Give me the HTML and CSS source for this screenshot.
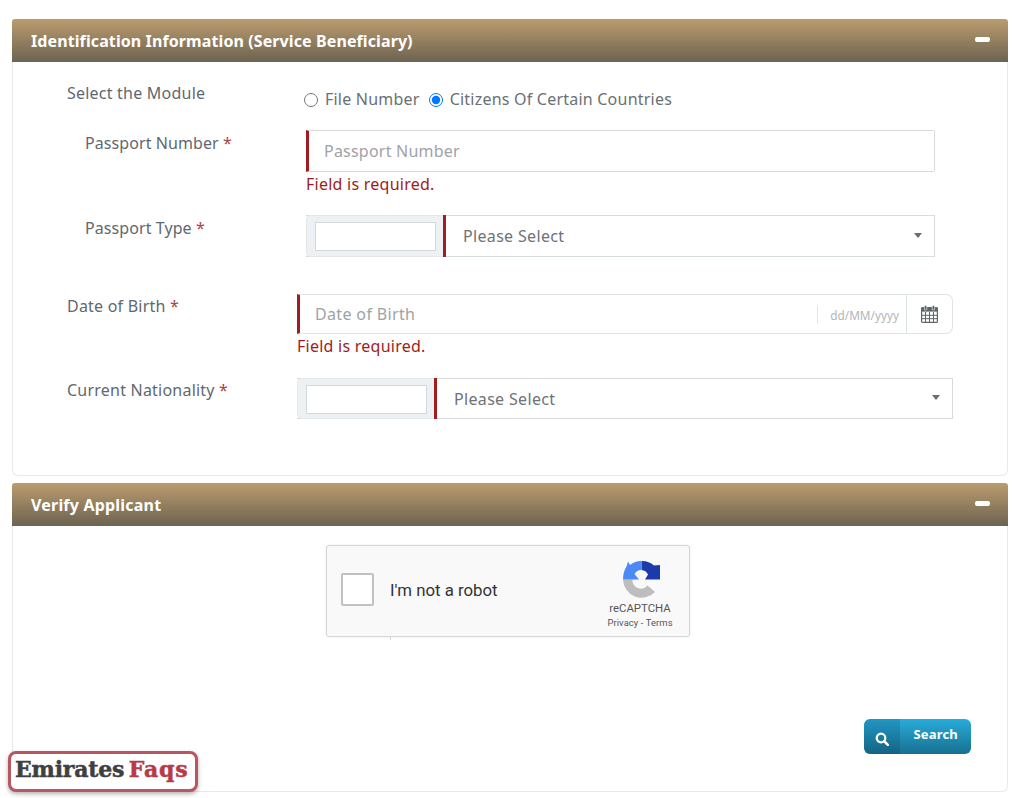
FILE: index.html
```html
<!DOCTYPE html>
<html lang="en">
<head>
<meta charset="utf-8">
<title>Identification Information</title>
<link rel="stylesheet" href="styles.css">
</head>
<body>
<main class="page">
  <section class="panel panel-id">
    <header class="panel-head">
      <h2 class="panel-title">Identification Information (Service Beneficiary)</h2>
      <span class="collapse"></span>
    </header>
    <div class="form">
      <div class="row row-module">
        <label class="label">Select the Module</label>
        <div class="radios">
          <label class="radio"><input type="radio" name="module"><span>File Number</span></label>
          <label class="radio"><input type="radio" name="module" checked><span>Citizens Of Certain Countries</span></label>
        </div>
      </div>
      <div class="row nested row-passport">
        <label class="label">Passport Number <span class="req">*</span></label>
        <div>
          <input class="input tall" type="text" placeholder="Passport Number">
          <div class="error">Field is required.</div>
        </div>
      </div>
      <div class="row nested row-type">
        <label class="label">Passport Type <span class="req">*</span></label>
        <div class="select tall">
          <div class="addon"><span class="addon-box"></span></div>
          <div class="select-value"><span>Please Select</span><span class="caret"></span></div>
        </div>
      </div>
      <div class="row row-dob">
        <label class="label">Date of Birth <span class="req">*</span></label>
        <div>
          <div class="date">
            <input class="date-input" type="text" placeholder="Date of Birth">
            <span class="format">dd/MM/yyyy</span>
            <span class="date-btn">
              <svg class="cal" width="17" height="18" viewBox="0 0 17 18" aria-hidden="true">
                <rect x="0.6" y="2.6" width="15.8" height="14.8" rx="1" fill="none" stroke="#5d666c" stroke-width="1.2"/>
                <rect x="0.6" y="2.6" width="15.8" height="4" fill="#5d666c"/>
                <path d="M4.5 7v10M8.5 7v10M12.5 7v10M1 10.3h15M1 13.7h15" stroke="#5d666c" stroke-width="1"/>
                <rect x="3.4" y="0.5" width="2.4" height="4.5" rx="1" fill="#5d666c" stroke="#fff" stroke-width=".6"/>
                <rect x="11.2" y="0.5" width="2.4" height="4.5" rx="1" fill="#5d666c" stroke="#fff" stroke-width=".6"/>
              </svg>
            </span>
          </div>
          <div class="error">Field is required.</div>
        </div>
      </div>
      <div class="row row-nat">
        <label class="label">Current Nationality <span class="req">*</span></label>
        <div class="select nat">
          <div class="addon"><span class="addon-box"></span></div>
          <div class="select-value"><span>Please Select</span><span class="caret"></span></div>
        </div>
      </div>
    </div>
  </section>

  <section class="panel panel-verify">
    <header class="panel-head">
      <h2 class="panel-title verify-title">Verify Applicant</h2>
      <span class="collapse"></span>
    </header>
    <div class="verify">
      <div class="captcha">
        <span class="check"></span>
        <span class="robot">I'm not a robot</span>
        <div class="brand">
          <svg class="logo" width="37" height="37" viewBox="0 0 37 37" aria-hidden="true">
            <path fill="#bdbdbd" d="M0 18.5H9.5A8.5 8.5 0 0 0 24.5 24.5L32 31A18.6 18.6 0 0 1 0 18.5Z"/>
            <path fill="#1c3aa9" d="M18.5 0A18.5 18.5 0 0 1 31 4.5L37 4V18.5H22L25 13.5A8 8 0 0 0 18.5 9Z"/>
            <path fill="#4a8af4" d="M18.5 0V9A8 8 0 0 0 11.5 13L16 18.5H0C0 13 1.5 8.5 3.5 5.5L5 .5L7 4A18 18 0 0 1 18.5 0Z"/>
          </svg>
          <span class="brand-name">reCAPTCHA</span>
          <span class="brand-links">Privacy - Terms</span>
        </div>
      </div>
      <span class="captcha-tick"></span>
      <div class="actions">
        <button class="search" type="button">
          <span class="search-icon">
            <svg width="14" height="14" viewBox="0 0 14 14" aria-hidden="true">
              <circle cx="6" cy="6" r="4.3" fill="none" stroke="#fff" stroke-width="2.2"/>
              <path d="M9.2 9.2 12.8 12.8" stroke="#fff" stroke-width="2.6" stroke-linecap="round"/>
            </svg>
          </span>
          <span class="search-text">Search</span>
        </button>
      </div>
    </div>
  </section>
</main>
<div class="stamp"><span class="stamp-dark">Emirates</span> <span class="stamp-red">Faqs</span></div>
</body>
</html>
```
FILE: styles.css
```css
* { box-sizing: border-box; }
html, body { margin: 0; height: 798px; overflow: hidden; background: #fff; }
body { font-family: "Noto Sans", "Open Sans", sans-serif; font-size: 16px; line-height: 24px; color: #5f686e; position: relative; letter-spacing: .22px; }

.page { padding: 19px 16px 0 12px; display: flex; flex-direction: column; gap: 7px; }

.panel { border: 1px solid #e7eaeb; border-top: 0; border-radius: 6px; background: #fff; }
.panel-id { height: 457px; }
.panel-verify { height: 309px; }

.panel-head {
  height: 43px; margin: 0 -1px; padding: 0 18px 0 19px;
  display: flex; align-items: center; justify-content: space-between;
  background: linear-gradient(#bb9c6f, #6c6351);
  border-radius: 3px 3px 0 0;
}
.panel-title { margin: 0; font-size: 16px; font-weight: 700; color: #fff; line-height: 24px; letter-spacing: .1px; }
.verify-title { letter-spacing: .2px; }
.collapse { width: 15px; height: 5px; margin-top: -3px; background: #fff; border-radius: 2px; }

.form { padding: 19px 54px 0; }
.row { display: grid; grid-template-columns: 230px 1fr; }
.nested { grid-template-columns: 221px 1fr; padding: 0 18px; }
.label { display: block; }
.nested .label { padding-top: 1px; letter-spacing: .08px; }
.req { color: #a94442; }

.row-module { margin-bottom: 19px; }
.row-passport { margin-bottom: 19px; }
.row-type { margin-bottom: 37px; }
.row-dob { margin-bottom: 20px; }

.radios { margin-top: 6px; padding-left: 7px; display: flex; gap: 9px; color: #6b7075; }
.radio { display: flex; align-items: center; gap: 7px; white-space: nowrap; }
.radio input { width: 14px; height: 14px; margin: 2px 0 0; }

.input { display: block; width: 100%; font: inherit; letter-spacing: inherit; color: inherit; background: #fff; outline: 0; }
.tall { height: 42px; }
.input {
  border: 1px solid #d6dcde; border-left: 3px solid #a01c20; border-radius: 0 2px 2px 0;
  padding: 0 15px;
}
::placeholder { color: #9ea3a6; opacity: 1; }
.error { color: #a01c20; letter-spacing: .25px; }

.select { display: flex; border: 1px solid #d6dcde; border-left: 0; }
.nat { height: 41px; }
.addon {
  width: 137px; padding: 6px 7px 5px 8px; background: #eef1f3;
  border: 1px solid #e4e8ea; border-right: 0; border-radius: 5px 0 0 5px; margin: -1px 0;
  display: flex; align-items: center;
}
.addon-box { display: block; width: 100%; height: 29px; background: #fff; border: 1px solid #d3d8da; }
.select-value {
  flex: 1; margin: -1px 0; border-left: 3px solid #a01c20; padding: 0 12px 0 17px;
  display: flex; align-items: center; justify-content: space-between; color: #6d7377; letter-spacing: .33px;
}
.caret { width: 0; height: 0; border: 4.5px solid transparent; border-top: 5px solid #666c70; border-bottom: 0; margin-top: -2px; }

.date {
  height: 40px; display: flex; align-items: center;
  border: 1px solid #dfe4e5; border-left: 3px solid #a01c20; border-radius: 0 7px 7px 0;
}
.date-input { flex: 1; min-width: 0; height: 100%; border: 0; outline: 0; padding: 0 0 0 15px; font: inherit; letter-spacing: .35px; background: transparent; }
.format { font-size: 11.8px; letter-spacing: 0; color: #b2b6b8; padding: 0 7px 0 12px; border-left: 1px solid #e3e6e7; line-height: 18px; margin-top: 1px; }
.date-btn { width: 46px; height: 100%; border-left: 1px solid #dfe4e5; display: flex; align-items: center; justify-content: center; }

.verify { padding: 19px 36px 38px 313px; position: relative; }
.captcha {
  width: 364px; height: 92px; position: relative; display: flex; align-items: center;
  padding: 0 14px 0 14px; letter-spacing: 0;
  background: #f9f9f9; border: 1px solid #d6d6d6; border-radius: 3px;
  box-shadow: 0 0 3px rgba(0,0,0,.08);
}
.check { width: 33px; height: 33px; margin-top: -4px; background: #fff; border: 2px solid #c1c1c1; border-radius: 2px; }
.robot { margin-left: 16px; font-family: Roboto, sans-serif; font-size: 16.8px; color: #333; flex: 1; margin-top: -2px; }
.brand { width: 70px; display: flex; flex-direction: column; align-items: center; margin-top: 6px; }
.logo { display: block; margin: 2px 0 2px 3px; }
.brand-name { font-family: Roboto, sans-serif; font-size: 11.4px; line-height: 16px; color: #555; }
.brand-links { font-family: Roboto, sans-serif; font-size: 9.4px; line-height: 14px; color: #555; white-space: nowrap; letter-spacing: .1px; }
.captcha-tick { display: block; width: 1px; height: 3px; margin-left: 64px; background: #d8d8d8; }
.actions { display: flex; justify-content: flex-end; margin-top: 79px; }
.search {
  width: 107px; height: 35px; padding: 0; border: 0; border-radius: 6px; display: flex; overflow: hidden;
  background: linear-gradient(#28acdb, #18708f); color: #fff;
  font-family: "Noto Sans", sans-serif; font-size: 13px; font-weight: 700; line-height: 30px;
}
.search-icon { width: 36px; height: 100%; padding-top: 4px; display: flex; align-items: center; justify-content: center; background: rgba(0,40,70,.16); }
.search-text { flex: 1; padding-right: 13px; text-align: right; letter-spacing: .2px; }

.stamp {
  position: absolute; left: 8px; top: 751px; width: 190px; height: 41px;
  background: #fff; border: 3px solid #b85661; border-radius: 8px;
  box-shadow: 0 2px 4px rgba(0,0,0,.3);
  font-family: "DejaVu Serif", serif; font-weight: 700; font-size: 22px; line-height: 30px;
  padding-left: 4px; white-space: nowrap; word-spacing: -3px; letter-spacing: -.2px;
  -webkit-text-stroke: .5px currentColor;
}
.stamp-dark { color: #3f3f42; }
.stamp-red { color: #b73a47; letter-spacing: .8px; }
```
